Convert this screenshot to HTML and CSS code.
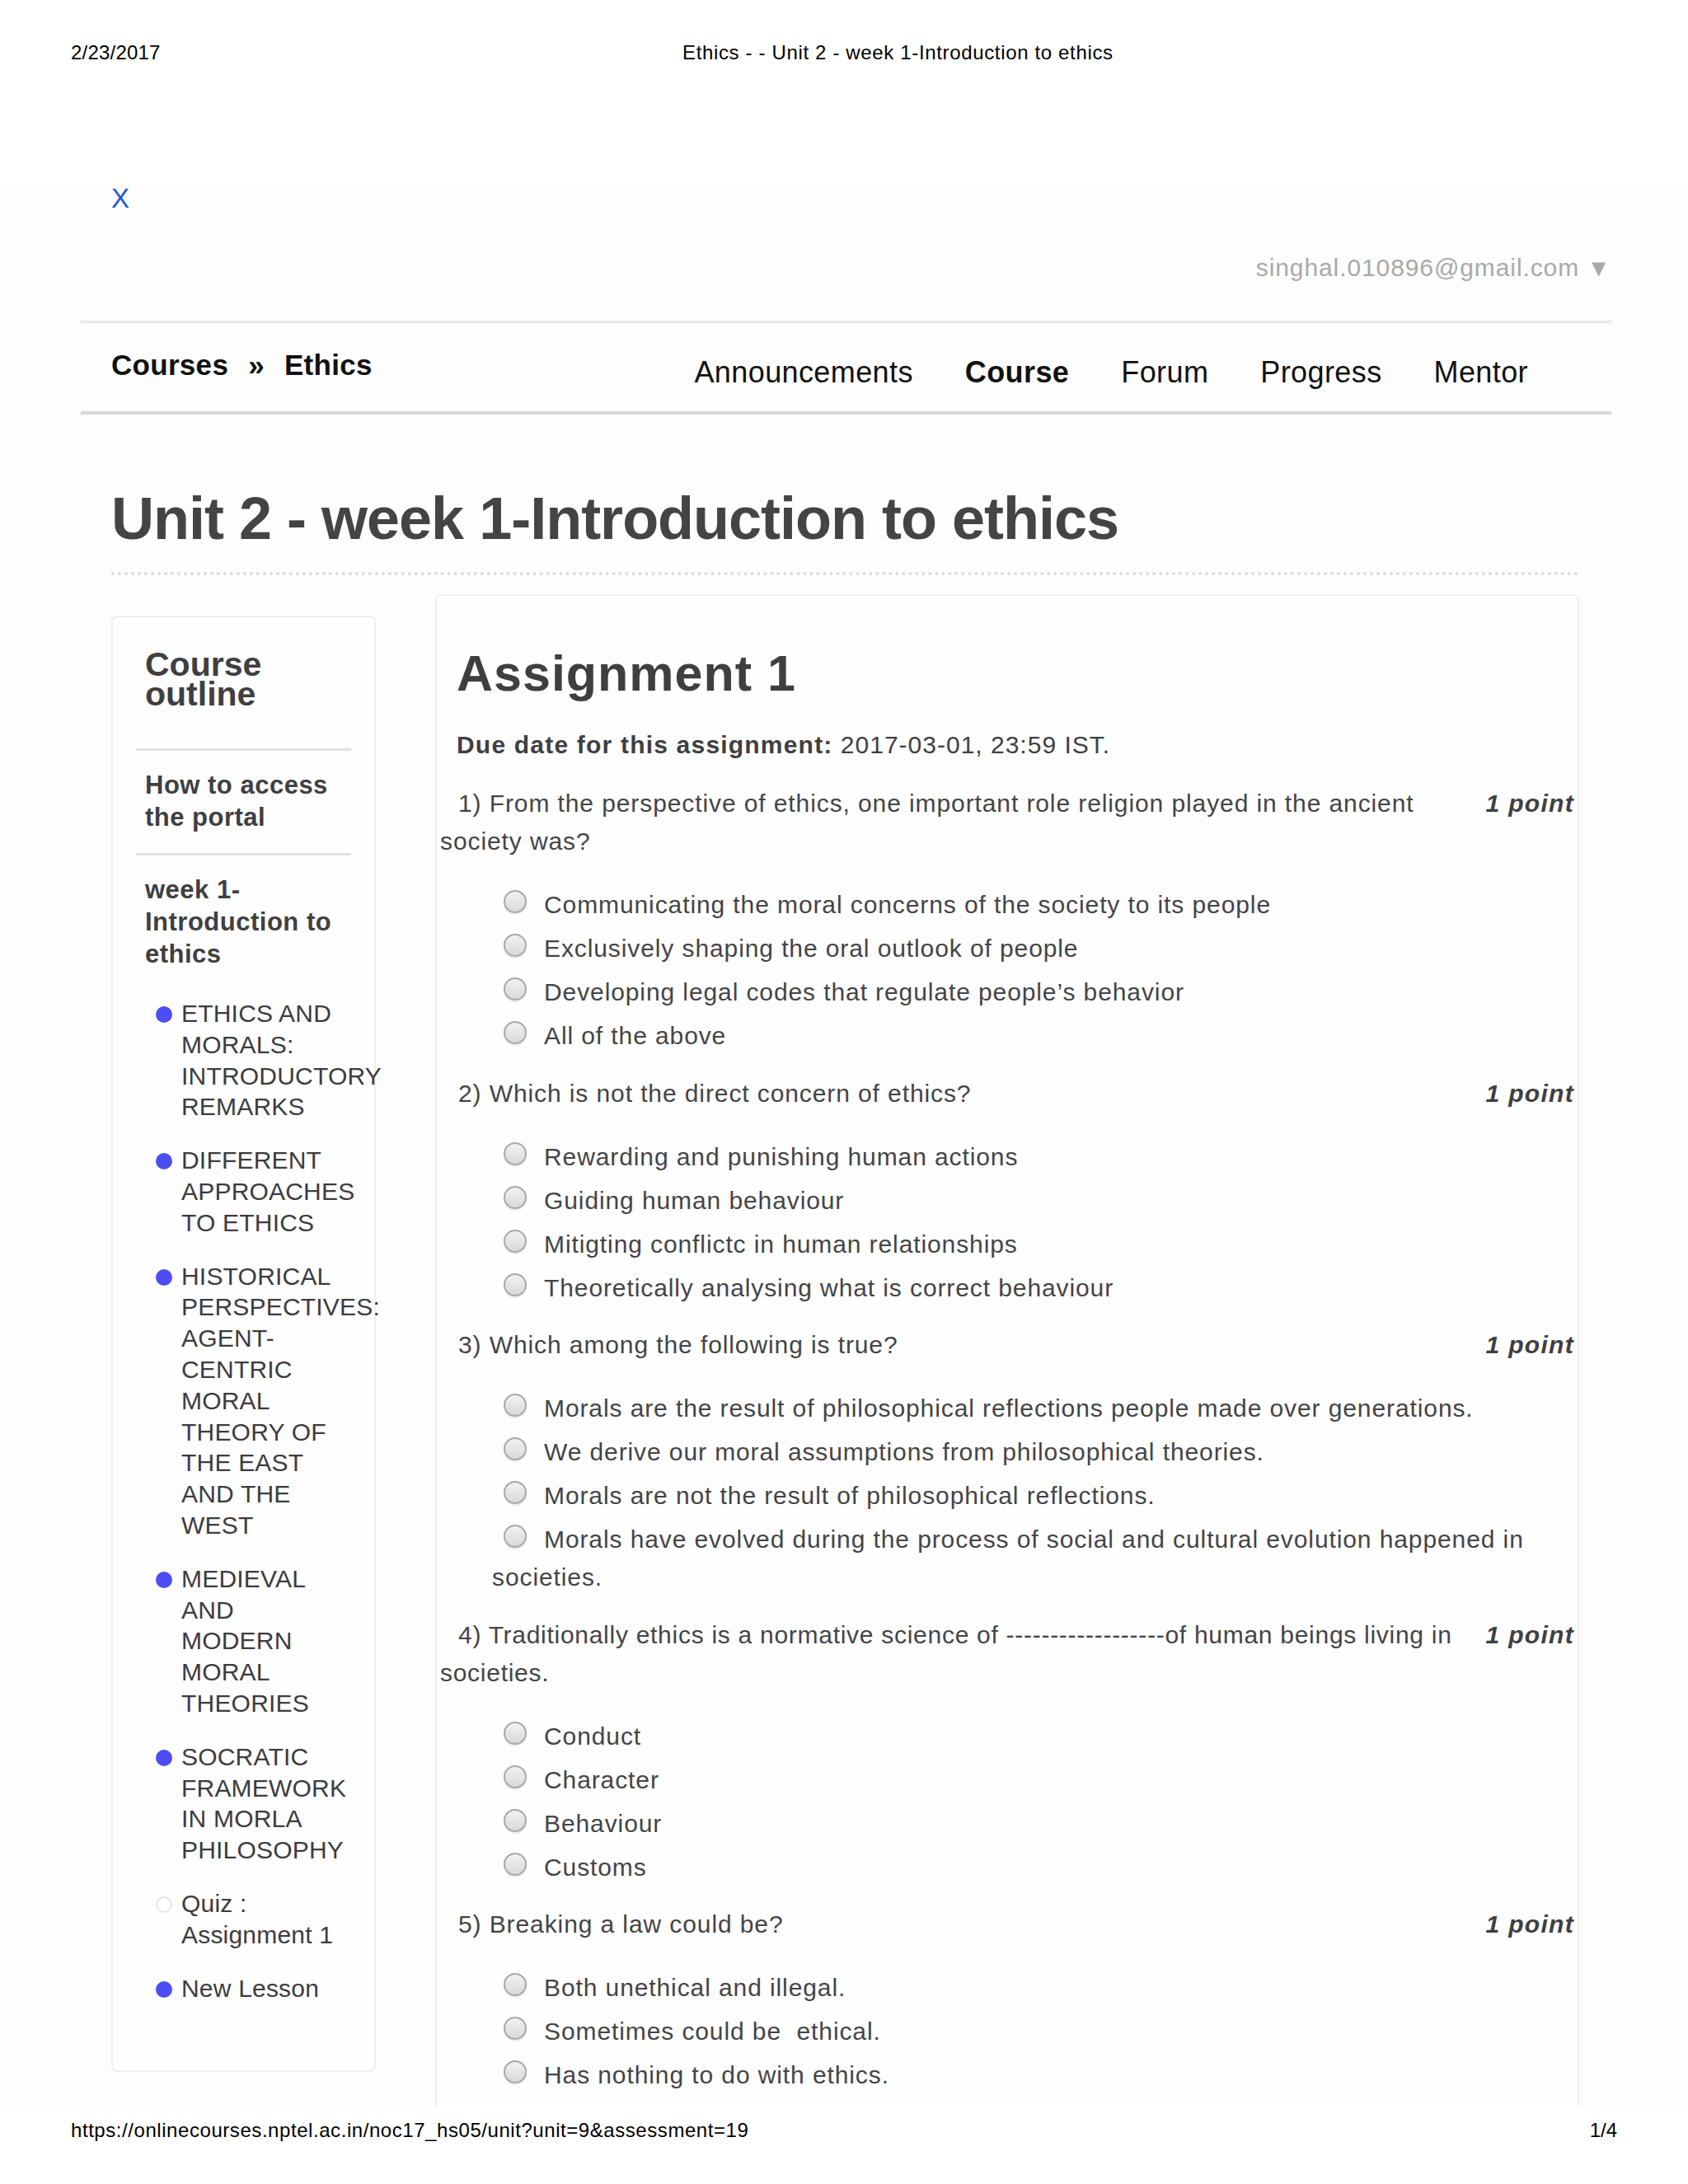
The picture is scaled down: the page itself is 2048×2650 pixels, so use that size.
FILE: index.html
```html
<!DOCTYPE html>
<html lang="en">
<head>
<meta charset="utf-8">
<title>Ethics - - Unit 2 - week 1-Introduction to ethics</title>
<link rel="stylesheet" href="styles.css">
</head>
<body>
<header class="pdf-head">
  <span class="pdf-date">2/23/2017</span>
  <span class="pdf-title">Ethics - - Unit 2 - week 1-Introduction to ethics</span>
</header>

<div class="page">
  <div class="close-row"><a class="close-x">X</a></div>
  <div class="user-row">singhal.010896@gmail.com <span class="caret">▼</span></div>
  <div class="rule-light"></div>

  <nav class="nav-row">
    <div class="crumbs">Courses <span class="raquo">»</span> Ethics</div>
    <ul class="tabs">
      <li>Announcements</li>
      <li class="active">Course</li>
      <li>Forum</li>
      <li>Progress</li>
      <li>Mentor</li>
    </ul>
  </nav>
  <div class="rule-dark"></div>

  <h1 class="unit-title">Unit 2 - week 1-Introduction to ethics</h1>
  <div class="rule-dotted"></div>

  <div class="columns">
    <aside class="outline">
      <h3 class="outline-title">Course outline</h3>
      <div class="outline-sep"></div>
      <div class="outline-unit">How to access the portal</div>
      <div class="outline-sep"></div>
      <div class="outline-unit">week 1-Introduction to ethics</div>
      <ul class="lessons">
        <li><span class="dot"></span><span class="lesson-text">ETHICS AND MORALS: INTRODUCTORY REMARKS</span></li>
        <li><span class="dot"></span><span class="lesson-text">DIFFERENT APPROACHES TO ETHICS</span></li>
        <li><span class="dot"></span><span class="lesson-text">HISTORICAL PERSPECTIVES: AGENT-CENTRIC MORAL THEORY OF THE EAST AND THE WEST</span></li>
        <li><span class="dot"></span><span class="lesson-text">MEDIEVAL AND MODERN MORAL THEORIES</span></li>
        <li><span class="dot"></span><span class="lesson-text">SOCRATIC FRAMEWORK IN MORLA PHILOSOPHY</span></li>
        <li><span class="dot hollow"></span><span class="lesson-text">Quiz : Assignment 1</span></li>
        <li><span class="dot"></span><span class="lesson-text">New Lesson</span></li>
      </ul>
    </aside>

    <main class="assessment">
      <h2 class="assign-title">Assignment 1</h2>
      <p class="due"><b>Due date for this assignment:</b> 2017-03-01, 23:59 IST.</p>

      <div class="question">
        <div class="q-text"><span class="points">1 point</span>1) From the perspective of ethics, one important role religion played in the ancient society was?</div>
        <div class="options">
          <div class="option"><span class="radio"></span>Communicating the moral concerns of the society to its people</div>
          <div class="option"><span class="radio"></span>Exclusively shaping the oral outlook of people</div>
          <div class="option"><span class="radio"></span>Developing legal codes that regulate people’s behavior</div>
          <div class="option"><span class="radio"></span>All of the above</div>
        </div>
      </div>

      <div class="question">
        <div class="q-text"><span class="points">1 point</span>2) Which is not the direct concern of ethics?</div>
        <div class="options">
          <div class="option"><span class="radio"></span>Rewarding and punishing human actions</div>
          <div class="option"><span class="radio"></span>Guiding human behaviour</div>
          <div class="option"><span class="radio"></span>Mitigting conflictc in human relationships</div>
          <div class="option"><span class="radio"></span>Theoretically analysing what is correct behaviour</div>
        </div>
      </div>

      <div class="question">
        <div class="q-text"><span class="points">1 point</span>3) Which among the following is true?</div>
        <div class="options">
          <div class="option"><span class="radio"></span>Morals are the result of philosophical reflections people made over generations.</div>
          <div class="option"><span class="radio"></span>We derive our moral assumptions from philosophical theories.</div>
          <div class="option"><span class="radio"></span>Morals are not the result of philosophical reflections.</div>
          <div class="option"><span class="radio"></span>Morals have evolved during the process of social and cultural evolution happened in societies.</div>
        </div>
      </div>

      <div class="question">
        <div class="q-text tight"><span class="points">1 point</span>4) Traditionally ethics is a normative science of ------------------of human beings living in societies.</div>
        <div class="options">
          <div class="option"><span class="radio"></span>Conduct</div>
          <div class="option"><span class="radio"></span>Character</div>
          <div class="option"><span class="radio"></span>Behaviour</div>
          <div class="option"><span class="radio"></span>Customs</div>
        </div>
      </div>

      <div class="question">
        <div class="q-text"><span class="points">1 point</span>5) Breaking a law could be?</div>
        <div class="options">
          <div class="option"><span class="radio"></span>Both unethical and illegal.</div>
          <div class="option"><span class="radio"></span>Sometimes could be &nbsp;ethical.</div>
          <div class="option"><span class="radio"></span>Has nothing to do with ethics.</div>
        </div>
      </div>
    </main>
  </div>
</div>

<footer class="pdf-foot">
  <span class="pdf-url">https://onlinecourses.nptel.ac.in/noc17_hs05/unit?unit=9&amp;assessment=19</span>
  <span>1/4</span>
</footer>
</body>
</html>
```

FILE: styles.css
```css
html, body {
  margin: 0;
  padding: 0;
  background: #ffffff;
}

body {
  font-family: "Liberation Sans", Arial, Helvetica, sans-serif;
  color: #444444;
  width: 2048px;
}

/* ---------- PDF print header / footer ---------- */
.pdf-head {
  box-sizing: border-box;
  height: 222px;
  padding: 50px 0 0 86px;
  display: grid;
  grid-template-columns: 742px 1fr;
  font-size: 24px;
  line-height: 28px;
  color: #000000;
  align-content: start;
}

.pdf-date {
  letter-spacing: 0.2px;
}

.pdf-title {
  letter-spacing: 0.65px;
}

.pdf-foot {
  box-sizing: border-box;
  height: 95px;
  padding: 16px 86px 0 86px;
  display: flex;
  justify-content: space-between;
  font-size: 24px;
  line-height: 28px;
  color: #000000;
}

.pdf-url {
  letter-spacing: 0.56px;
}

/* ---------- Page ---------- */
.page {
  box-sizing: border-box;
  height: 2333px;
  overflow: hidden;
  background: #fdfdfd;
  padding: 0 93px 0 98px;
}

.close-row {
  padding-left: 37px;
  height: 38px;
}

.close-x {
  font-size: 33px;
  line-height: 38px;
  color: #1f5bd4;
  font-weight: 400;
}

.user-row {
  margin-top: 47px;
  text-align: right;
  padding-right: 1px;
  font-size: 30px;
  line-height: 36px;
  color: #a9a9a9;
  letter-spacing: 0.9px;
}

.caret {
  font-size: 29px;
  letter-spacing: 0;
}

.rule-light {
  margin-top: 46px;
  height: 3px;
  background: #e9e9ea;
}

.nav-row {
  box-sizing: border-box;
  display: flex;
  justify-content: space-between;
  align-items: flex-start;
  padding: 31px 101px 0 37px;
  height: 107px;
}

.crumbs {
  font-size: 35px;
  line-height: 40px;
  font-weight: 700;
  color: #111111;
  letter-spacing: 0.3px;
}

.raquo {
  margin: 0 14px;
}

.tabs {
  list-style: none;
  margin: 9px 0 0 0;
  padding: 0;
  display: flex;
  gap: 63px;
  font-size: 36px;
  line-height: 40px;
  color: #111111;
  letter-spacing: 0.4px;
}

.tabs .active {
  font-weight: 700;
}

.rule-dark {
  height: 4px;
  background: #d9d9db;
}

.unit-title {
  margin: 83px 0 0 0;
  padding-left: 37px;
  font-size: 72px;
  line-height: 86px;
  font-weight: 700;
  color: #444446;
  letter-spacing: -1px;
}

.rule-dotted {
  margin: 22px 39px 0 37px;
  height: 0;
  border-bottom: 4px dotted #dcdcde;
}

/* ---------- Columns ---------- */
.columns {
  display: flex;
  align-items: flex-start;
  gap: 72px;
  padding-left: 37px;
}

/* ---------- Sidebar ---------- */
.outline {
  box-sizing: border-box;
  width: 321px;
  margin-top: 49px;
  padding: 39px 28px 81px 28px;
  border: 2px solid #eeeef0;
  border-radius: 7px;
  background: #fefefe;
}

.outline-title {
  margin: 0 0 48px 0;
  padding-left: 11px;
  font-size: 41px;
  line-height: 36px;
  font-weight: 700;
  color: #3f3f42;
}

.outline-sep {
  height: 3px;
  background: #e3e3e5;
}

.outline-unit {
  margin: 22px 0 24px 0;
  padding-left: 11px;
  font-size: 31px;
  line-height: 39px;
  font-weight: 700;
  color: #3f3f42;
  letter-spacing: 0.5px;
}

.outline-unit:last-of-type {
  margin-bottom: 34px;
}

.lessons {
  list-style: none;
  margin: 0;
  padding: 0 0 0 24px;
}

.lessons li {
  display: flex;
  gap: 11px;
  margin-bottom: 27px;
  font-size: 30px;
  line-height: 37.8px;
  color: #3c3c3f;
  letter-spacing: 0.2px;
}

.lessons li:last-child {
  margin-bottom: 0;
}

.dot {
  flex: none;
  width: 20px;
  height: 20px;
  margin-top: 10px;
  border-radius: 50%;
  background: #4d4df5;
}

.dot.hollow {
  box-sizing: border-box;
  background: #ffffff;
  border: 2px solid #e4e4e6;
}

.lesson-text {
  width: 195px;
  flex: none;
}

/* ---------- Assessment ---------- */
.assessment {
  box-sizing: border-box;
  width: 1388px;
  min-height: 1900px;
  margin-top: 23px;
  padding: 59px 4px 0 4px;
  border: 2px solid #efeff1;
  border-radius: 7px;
  background: #fefefe;
}

.assign-title {
  margin: 0;
  padding-left: 20px;
  font-size: 61px;
  line-height: 70px;
  font-weight: 700;
  color: #3f3f42;
  letter-spacing: 1px;
}

.due {
  margin: 29px 0 25px 0;
  padding-left: 20px;
  font-size: 30px;
  line-height: 46px;
  color: #3f3f42;
  letter-spacing: 1px;
}

.due b {
  font-weight: 700;
  letter-spacing: 1.2px;
}

.question {
  margin-bottom: 23.5px;
  font-size: 30px;
  color: #444446;
  letter-spacing: 0.9px;
}

.q-text {
  line-height: 46px;
  text-indent: 22px;
}

.q-text.tight {
  letter-spacing: 0.72px;
}

.points {
  float: right;
  text-indent: 0;
  font-weight: 700;
  font-style: italic;
  color: #3f3f42;
  margin-left: 20px;
  letter-spacing: 1.3px;
}

.options {
  margin-top: 31px;
}

.option {
  padding-left: 63px;
  line-height: 46px;
  margin-bottom: 7px;
}

.radio {
  display: inline-block;
  box-sizing: border-box;
  width: 28px;
  height: 28px;
  margin: 5px 21px 0 14px;
  vertical-align: top;
  border-radius: 50%;
  border: 2px solid #a9a9ab;
  background: linear-gradient(#f2f2f3, #d9d9db);
  box-shadow: 0 2px 1px rgba(0, 0, 0, 0.08);
}
```
